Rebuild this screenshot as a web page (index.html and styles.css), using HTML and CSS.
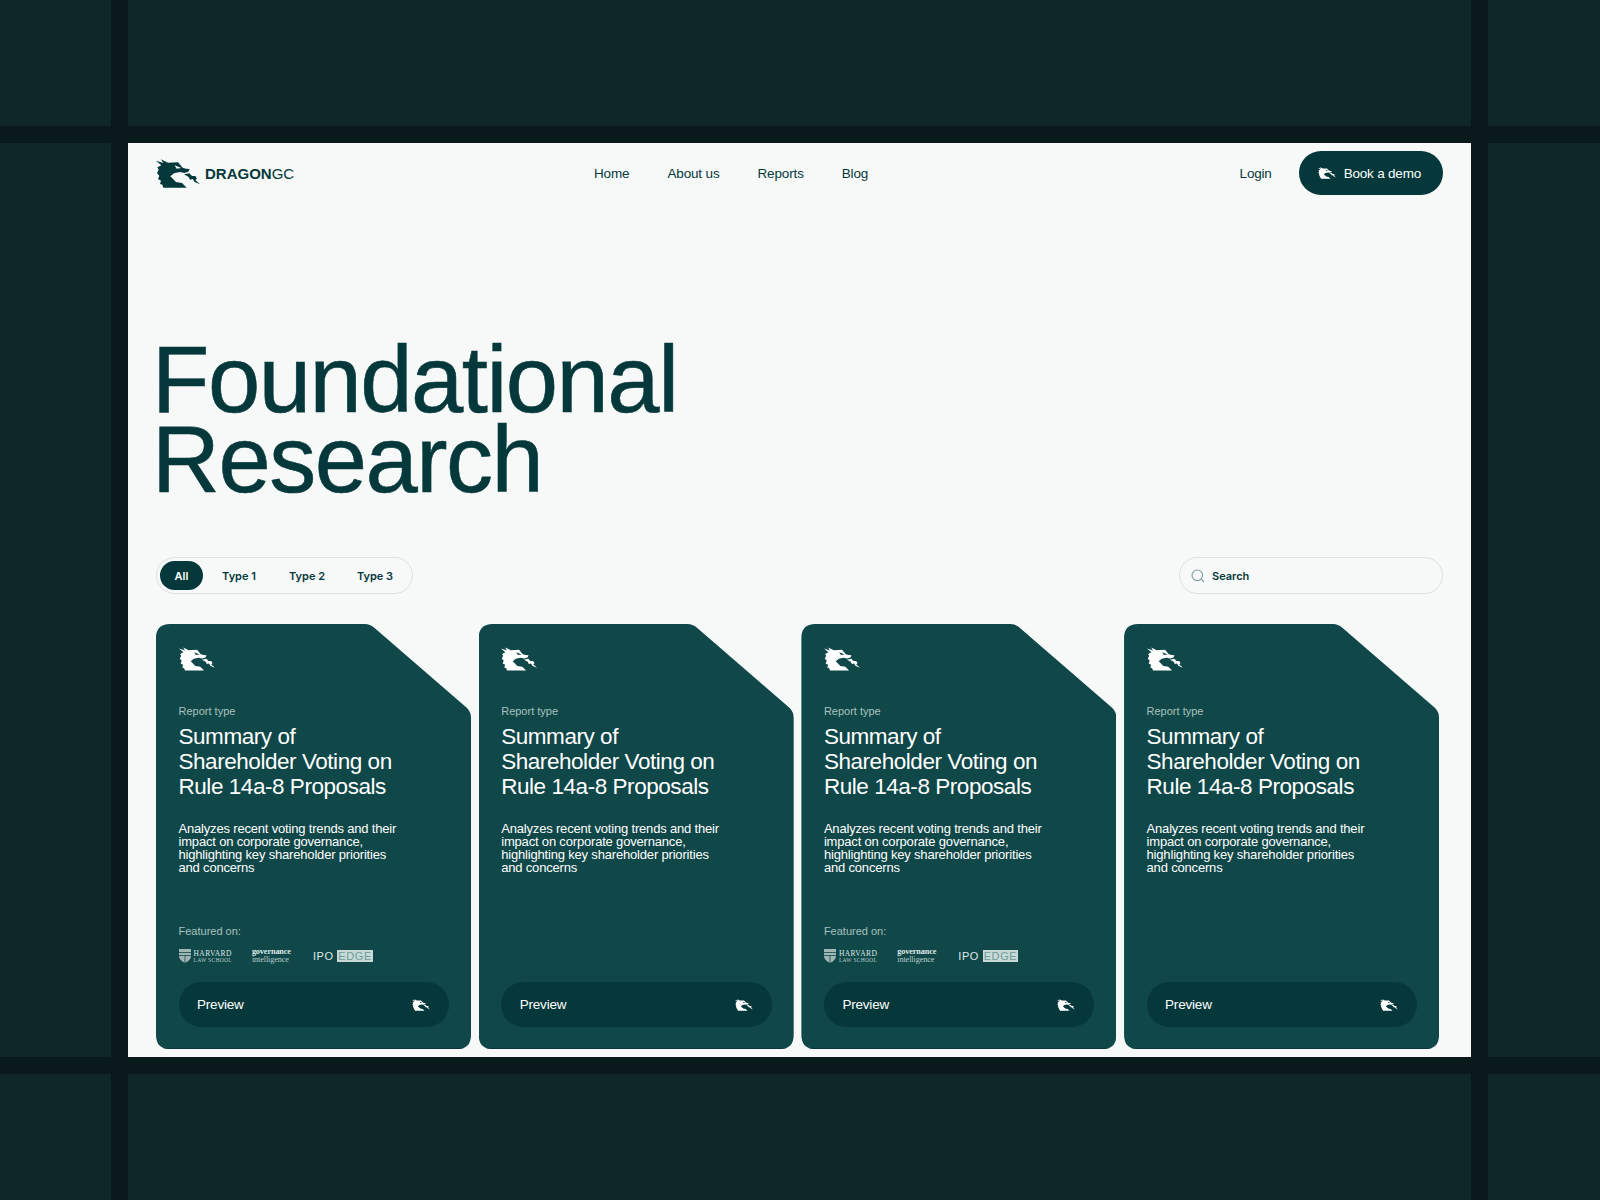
FILE: index.html
```html
<!DOCTYPE html>
<html lang="en">
<head>
    <meta charset="UTF-8">
    <meta name="viewport" content="width=device-width, initial-scale=1.0">
    <title>DragonGC - Foundational Research</title>
    <link rel="stylesheet" href="styles.css">
</head>
<body>
    <svg class="sprite" width="0" height="0" aria-hidden="true">
        <symbol id="dragon" viewBox="0 0 132 85">
            <path fill-rule="evenodd" d="M0 4 L22 11 L15 0 L36 10 L66 9 L80 25 L90 28 L101 29 L97 37 L85 41 L72 38 L54 42 L43 51 L60 68 L78 71 L92 85 L22 85 L19 76 L12 74 L15 64 L6 59 L10 49 L3 41 L8 31 L4 24 L16 18 Z M56 18 L76 26 L62 28 Z"/>
            <path d="M84 45 L100 42 L108 50 L118 50 L123 58 L118 62 L132 75 L116 68 L110 59 L102 61 L98 53 Z"/>
        </symbol>
    </svg>
    <div class="backdrop">
        <div class="cell"></div><div class="cell"></div><div class="cell"></div>
        <div class="cell"></div>
        <main class="page">
            <header class="nav">
                <a class="brand">
                    <svg class="brand-mark"><use href="#dragon"/></svg>
                    <span class="brand-name"><b>DRAGON</b>GC</span>
                </a>
                <nav class="nav-links">
                    <a>Home</a>
                    <a>About us</a>
                    <a>Reports</a>
                    <a>Blog</a>
                </nav>
                <div class="nav-actions">
                    <a class="login">Login</a>
                    <a class="demo-btn">
                        <svg class="demo-mark"><use href="#dragon"/></svg>
                        Book a demo
                    </a>
                </div>
            </header>

            <h1>Foundational<br>Research</h1>

            <div class="toolbar">
                <div class="filters">
                    <button class="filter active">All</button>
                    <button class="filter">Type 1</button>
                    <button class="filter">Type 2</button>
                    <button class="filter">Type 3</button>
                </div>
                <div class="search">
                    <svg class="search-icon" viewBox="0 0 14 14"><circle cx="6.3" cy="6.3" r="5.3"/><path d="M10.2 10.2 L13 13"/></svg>
                    <span>Search</span>
                </div>
            </div>

            <section class="cards">
                <article class="card">
                    <svg class="card-mark"><use href="#dragon"/></svg>
                    <p class="card-type">Report type</p>
                    <h2>Summary of<br>Shareholder Voting on<br>Rule 14a-8 Proposals</h2>
                    <p class="card-text">Analyzes recent voting trends and their<br>impact on corporate governance,<br>highlighting key shareholder priorities<br>and concerns</p>
                    <div class="featured">
                        <p>Featured on:</p>
                        <div class="featured-logos">
                            <div class="harvard">
                                <svg class="shield" viewBox="0 0 12 14"><path d="M0 0 H12 V7 Q12 11 6 14 Q0 11 0 7 Z"/><path class="shield-lines" d="M0 3.5 H12 M0 6.5 H12 M6 6.5 V14"/></svg>
                                <div><span class="harvard-top">HARVARD</span><span class="harvard-sub">LAW SCHOOL</span></div>
                            </div>
                            <div class="gov"><b>governance</b><span>intelligence</span></div>
                            <div class="ipo">IPO <span>EDGE</span></div>
                        </div>
                    </div>
                    <a class="preview">Preview <svg class="preview-mark"><use href="#dragon"/></svg></a>
                </article>

                <article class="card">
                    <svg class="card-mark"><use href="#dragon"/></svg>
                    <p class="card-type">Report type</p>
                    <h2>Summary of<br>Shareholder Voting on<br>Rule 14a-8 Proposals</h2>
                    <p class="card-text">Analyzes recent voting trends and their<br>impact on corporate governance,<br>highlighting key shareholder priorities<br>and concerns</p>
                    <a class="preview">Preview <svg class="preview-mark"><use href="#dragon"/></svg></a>
                </article>

                <article class="card">
                    <svg class="card-mark"><use href="#dragon"/></svg>
                    <p class="card-type">Report type</p>
                    <h2>Summary of<br>Shareholder Voting on<br>Rule 14a-8 Proposals</h2>
                    <p class="card-text">Analyzes recent voting trends and their<br>impact on corporate governance,<br>highlighting key shareholder priorities<br>and concerns</p>
                    <div class="featured">
                        <p>Featured on:</p>
                        <div class="featured-logos">
                            <div class="harvard">
                                <svg class="shield" viewBox="0 0 12 14"><path d="M0 0 H12 V7 Q12 11 6 14 Q0 11 0 7 Z"/><path class="shield-lines" d="M0 3.5 H12 M0 6.5 H12 M6 6.5 V14"/></svg>
                                <div><span class="harvard-top">HARVARD</span><span class="harvard-sub">LAW SCHOOL</span></div>
                            </div>
                            <div class="gov"><b>governance</b><span>intelligence</span></div>
                            <div class="ipo">IPO <span>EDGE</span></div>
                        </div>
                    </div>
                    <a class="preview">Preview <svg class="preview-mark"><use href="#dragon"/></svg></a>
                </article>

                <article class="card">
                    <svg class="card-mark"><use href="#dragon"/></svg>
                    <p class="card-type">Report type</p>
                    <h2>Summary of<br>Shareholder Voting on<br>Rule 14a-8 Proposals</h2>
                    <p class="card-text">Analyzes recent voting trends and their<br>impact on corporate governance,<br>highlighting key shareholder priorities<br>and concerns</p>
                    <a class="preview">Preview <svg class="preview-mark"><use href="#dragon"/></svg></a>
                </article>
            </section>
        </main>
        <div class="cell"></div>
        <div class="cell"></div><div class="cell"></div><div class="cell"></div>
    </div>
</body>
</html>
```

FILE: styles.css
```css
body {
    margin: 0;
    background-color: #09191c;
    font-family: "Liberation Sans", Arial, sans-serif;
    color: #05383a;
}
p, h1, h2 {
    margin: 0;
    font-weight: normal;
}
.sprite {
    position: absolute;
}
.backdrop {
    display: grid;
    grid-template-columns: 111px 1343px 112px;
    grid-template-rows: 126px 914px 126px;
    gap: 17px;
    width: 1600px;
    height: 1200px;
    overflow: hidden;
}
.cell {
    background-color: #10272a;
}
.page {
    background-color: #f7f9f9;
    padding: 8px 28px 0;
    overflow: hidden;
}

/* top bar */
.nav {
    display: flex;
    align-items: center;
    height: 44px;
}
.brand {
    display: flex;
    align-items: center;
    gap: 5px;
    width: 438px;
}
.brand-mark {
    width: 44px;
    height: 29px;
    fill: #05383a;
}
.brand-name {
    font-size: 15px;
    margin-top: 1px;
}
.brand-name b {
    font-weight: bold;
}
.nav-links {
    display: flex;
    gap: 38px;
    font-size: 13.5px;
    letter-spacing: -0.15px;
}
.nav-actions {
    display: flex;
    align-items: center;
    gap: 27px;
    margin-left: auto;
    font-size: 13.5px;
    letter-spacing: -0.2px;
}
.demo-btn {
    display: flex;
    align-items: center;
    gap: 8px;
    height: 44px;
    padding: 0 22px 0 19px;
    border-radius: 22px;
    background-color: #05383a;
    color: #fff;
}
.demo-mark {
    width: 18px;
    height: 12px;
    fill: #fff;
}

/* heading */
h1 {
    margin-top: 145px;
    margin-left: -4px;
    font-size: 94px;
    line-height: 80px;
    letter-spacing: -1.5px;
    color: #05383a;
    -webkit-text-stroke: 0.6px #05383a;
}

/* filters + search */
.toolbar {
    display: flex;
    justify-content: space-between;
    margin-top: 57px;
}
.filters {
    display: flex;
    align-items: center;
    box-sizing: border-box;
    width: 257px;
    height: 37px;
    padding: 0 3px;
    border: 1px solid #d9e1e1;
    border-radius: 19px;
}
.filter {
    flex: none;
    width: 68px;
    height: 29px;
    padding: 0;
    border: none;
    border-radius: 15px;
    background: none;
    color: #05383a;
    font-family: Inter, sans-serif;
    font-size: 11px;
    font-weight: 600;
    white-space: nowrap;
}
.filter.active {
    width: 43px;
    margin-right: 2px;
    background-color: #05383a;
    color: #fff;
}
.search {
    display: flex;
    align-items: center;
    gap: 7px;
    box-sizing: border-box;
    width: 264px;
    height: 37px;
    padding-left: 11px;
    border: 1px solid #d9e1e1;
    border-radius: 19px;
    font-family: Inter, sans-serif;
    font-size: 11px;
    font-weight: 600;
}
.search-icon {
    width: 14px;
    height: 14px;
    fill: none;
    stroke: #7f9c9c;
    stroke-width: 1.1;
}

/* report cards */
.cards {
    display: grid;
    grid-template-columns: repeat(4, 315px);
    gap: 7.7px;
    margin-top: 30px;
}
.card {
    display: flex;
    flex-direction: column;
    box-sizing: border-box;
    height: 425px;
    padding: 23px 22px 22px 22.5px;
    background-color: #104749;
    box-shadow: inset 0 -1px 0 #0b3436;
    color: #fff;
    clip-path: path('M14 0 H209 Q214 0 218 3.5 L311 84 Q315 88 315 94 V411 Q315 425 301 425 H14 Q0 425 0 411 V14 Q0 0 14 0 Z');
}
.card-mark {
    width: 36px;
    height: 24px;
    fill: #fff;
}
.card-type {
    margin-top: 33px;
    font-size: 11px;
    line-height: 14px;
    color: #a9c1bf;
}
h2 {
    margin-top: 7px;
    font-size: 22.5px;
    line-height: 24.8px;
    letter-spacing: -0.45px;
}
.card-text {
    margin-top: 24px;
    font-size: 13px;
    line-height: 12.75px;
    letter-spacing: -0.18px;
}
.featured {
    margin-top: 50px;
    font-size: 11px;
    line-height: 14px;
    color: #a9c1bf;
}
.featured-logos {
    display: flex;
    align-items: center;
    gap: 20px;
    height: 16px;
    margin-top: 10px;
    color: #dfe9e8;
}
.harvard {
    display: flex;
    align-items: center;
    gap: 3px;
    font-family: "Liberation Serif", serif;
}
.shield {
    width: 12px;
    height: 14px;
    fill: #9fb6b4;
}
.shield-lines {
    fill: none;
    stroke: #104749;
    stroke-width: 0.8;
}
.harvard span {
    display: block;
    white-space: nowrap;
}
.harvard-top {
    font-size: 7.5px;
    line-height: 7px;
    letter-spacing: 0.4px;
}
.harvard-sub {
    font-size: 5.5px;
    line-height: 6px;
    letter-spacing: 0.3px;
    color: #b8cbc9;
}
.gov {
    display: flex;
    flex-direction: column;
    font-family: "Liberation Serif", serif;
    font-size: 8.2px;
    line-height: 8px;
    letter-spacing: -0.1px;
}
.gov span {
    color: #b8cbc9;
}
.ipo {
    margin-left: 2px;
    font-size: 11px;
    line-height: 13px;
    letter-spacing: 0.6px;
    white-space: nowrap;
}
.ipo span {
    padding: 0 1px;
    background-color: #c7dad8;
    color: #6d9a98;
}
.preview {
    display: flex;
    align-items: center;
    justify-content: space-between;
    height: 45px;
    margin-top: auto;
    padding: 0 19px 0 18.5px;
    border-radius: 23px;
    background-color: #05383a;
    font-size: 13.5px;
    letter-spacing: -0.2px;
}
.preview-mark {
    width: 18px;
    height: 12px;
    fill: #fff;
}
```
